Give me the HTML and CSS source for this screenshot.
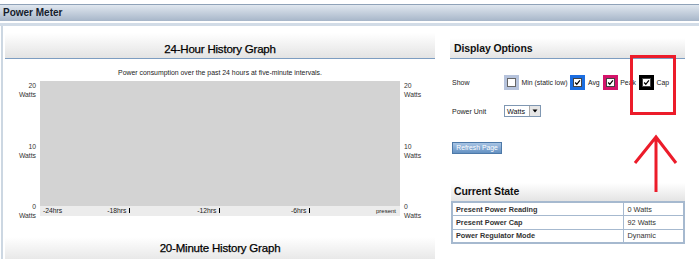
FILE: index.html
```html
<!DOCTYPE html>
<html>
<head>
<meta charset="utf-8">
<link rel="stylesheet" href="styles.css">
</head>
<body>
<div class="page">
  <div class="topbar">Power Meter</div>
  <div class="topband"></div>
  <div class="main">
    <div class="leftcol">
      <div class="bighead head24">24-Hour History Graph</div>
      <div class="subtitle">Power consumption over the past 24 hours at five-minute intervals.</div>
      <div class="graphrow">
        <div class="ylabels left">
          <div class="yl">20<br>Watts</div>
          <div class="yl">10<br>Watts</div>
          <div class="yl">0<br>Watts</div>
        </div>
        <div class="graph">
          <div class="plot"></div>
          <div class="xaxis">
            <div class="seg"><span>-24hrs</span><span class="tk">-18hrs<i class="tick"></i></span></div>
            <div class="seg end"><span class="tk">-12hrs<i class="tick"></i></span></div>
            <div class="seg end"><span class="tk">-6hrs<i class="tick"></i></span></div>
            <div class="seg end"><span class="present">present</span></div>
          </div>
        </div>
        <div class="ylabels right">
          <div class="yl">20<br>Watts</div>
          <div class="yl">10<br>Watts</div>
          <div class="yl">0<br>Watts</div>
        </div>
      </div>
      <div class="bighead head20">20-Minute History Graph</div>
    </div>
    <div class="rightcol">
      <div class="sidehead dohead">Display Options</div>
      <div class="optrow showrow">
        <div class="optlabel">Show</div>
        <div class="checks">
          <span class="cb c-min"><span class="box"></span></span><span class="cbl">Min (static low)</span>
          <span class="cb c-avg"><span class="box"><svg viewBox="0 0 9 9"><path d="M1.5 4.5 L3.6 6.8 L7.6 1.8" fill="none" stroke="#000" stroke-width="1.6"/></svg></span></span><span class="cbl">Avg</span>
          <span class="cb c-peak"><span class="box"><svg viewBox="0 0 9 9"><path d="M1.5 4.5 L3.6 6.8 L7.6 1.8" fill="none" stroke="#000" stroke-width="1.6"/></svg></span></span><span class="cbl">Peak</span>
          <span class="cb c-cap"><span class="box"><svg viewBox="0 0 9 9"><path d="M1.5 4.5 L3.6 6.8 L7.6 1.8" fill="none" stroke="#000" stroke-width="1.6"/></svg></span></span><span class="cbl">Cap</span>
        </div>
      </div>
      <div class="optrow unitrow">
        <div class="optlabel">Power Unit</div>
        <div class="select"><span class="selval">Watts</span><span class="selbtn"><svg viewBox="0 0 8 8"><path d="M1.5 2.5 L6.5 2.5 L4 5.5 Z" fill="#000"/></svg></span></div>
      </div>
      <div class="btnrow"><span class="btn">Refresh Page</span></div>
      <div class="sidehead cshead">Current State</div>
      <table class="state">
        <tr><th>Present Power Reading</th><td>0 Watts</td></tr>
        <tr><th>Present Power Cap</th><td>92 Watts</td></tr>
        <tr><th>Power Regulator Mode</th><td>Dynamic</td></tr>
      </table>
    </div>
  </div>
  <div class="redbox"></div>
  <svg class="redarrow" viewBox="0 0 50 64" width="50" height="64"><path d="M26 7 L26 62 M5 33 L26 7 L46 33" fill="none" stroke="#ec1c2a" stroke-width="3"/></svg>
</div>
</body>
</html>
```
FILE: styles.css
```css
* { box-sizing: border-box; }
html, body { margin: 0; padding: 0; background: #fff; }
body { font-family: "Liberation Sans", Arial, sans-serif; color: #222; }
.page { position: relative; width: 699px; height: 259px; overflow: hidden; padding-top: 4px; }

.topbar {
  height: 17px;
  border-top: 1px solid #8fa2b8;
  background: linear-gradient(#e0e7ef, #a7b6c9);
  font-weight: bold;
  font-size: 10px;
  line-height: 16px;
  padding-left: 3px;
  color: #15202c;
}
.topband { height: 3px; margin-top: 2px; background: #d2dce7; }

.main { display: flex; margin-left: 1px; border-left: 2px solid #ccd7e2; height: 240px; }

.leftcol { width: 430px; margin-left: 2px; }
.bighead {
  text-align: center;
  font-size: 11.5px;
  letter-spacing: -0.2px;
  color: #000;
  background: linear-gradient(#ffffff 10%, #e3e3e3);
  -webkit-text-stroke: 0.25px #000;
}
.head24 { margin-top: 4px; height: 29px; padding-top: 12px; line-height: 14px; border-bottom: 1px solid #7d9dc1; }
.head20 { margin-top: 14px; height: 30px; padding-top: 7px; line-height: 14px; }

.subtitle { text-align: center; font-size: 6.9px; line-height: 10px; margin-top: 9px; color: #222; }

.graphrow { display: flex; margin-top: 3px; height: 139px; }
.ylabels { display: flex; flex-direction: column; justify-content: space-between; font-size: 6.8px; line-height: 9px; color: #333; }
.ylabels.left { width: 31px; text-align: right; margin-right: 4px; }
.ylabels.right { width: 24px; text-align: left; margin-left: 4px; }
.graph { width: 360px; }
.plot { height: 125px; background: #d3d3d3; }
.xaxis { height: 10px; background: #ececec; display: flex; font-size: 6.8px; line-height: 10px; color: #222; }
.seg { flex: 1; display: flex; justify-content: space-between; padding-left: 3px; }
.seg.end { justify-content: flex-end; }
.tk { display: inline-flex; align-items: center; }
.tick { display: inline-block; width: 1.5px; height: 5px; background: #000; margin-left: 2px; margin-top: -2px; }
.present { font-size: 6px; padding-right: 4px; }

.rightcol { width: 235px; margin-left: 15px; }
.sidehead {
  font-weight: bold;
  font-size: 10.5px;
  letter-spacing: -0.1px;
  color: #111;
  padding-left: 4px;
  background: linear-gradient(#ffffff, #e4e4e4);
}
.dohead { margin-top: 12px; height: 21px; line-height: 20px; border-bottom: 1px solid #7d9dc1; }

.optrow { display: flex; align-items: center; font-size: 7px; color: #222; padding-left: 2px; }
.showrow { margin-top: 16px; height: 15px; }
.unitrow { margin-top: 15px; height: 12px; }
.optlabel { width: 52px; }
.checks { display: flex; align-items: center; }
.cb { width: 15px; height: 15px; padding: 3px; display: inline-block; }
.cb .box { display: block; width: 9px; height: 9px; background: #fff; border: 1px solid #444; position: relative; }
.cb .box svg { display: block; width: 7px; height: 7px; }
.c-min { background: #b6c3dc; }
.c-min .box { border-color: #666; }
.c-avg { background: #1b6de0; }
.c-peak { background: #d4146a; }
.c-cap { background: #000; }
.cbl { margin: 0 3px 0 2.5px; font-size: 6.9px; }

.select { display: flex; width: 37px; height: 12px; border: 1px solid #7f97b2; background: #fff; align-items: center; }
.selval { flex: 1; font-size: 7.2px; padding-left: 2px; color: #111; }
.selbtn { width: 11px; height: 10px; background: #e6e6e6; border-left: 1px solid #aaa; margin-right: 0; display: flex; align-items: center; justify-content: center; }
.selbtn svg { width: 8px; height: 8px; }

.btnrow { margin-top: 19px; padding-left: 2px; height: 12px; }
.btn {
  display: inline-block; width: 50px; height: 12px;
  border: 1px solid #4d79a8;
  background: linear-gradient(#a8c4e4, #6491c2);
  color: #fff; font-size: 6.8px; line-height: 10px; text-align: center;
}

.cshead { margin-top: 35px; height: 18px; line-height: 16px; font-weight: bold; padding-left: 3px; margin-left: 1px; }
.state { margin-left: 1px; width: 234px; border-collapse: collapse; border: 2px solid #a6b9cf; font-size: 7.3px; color: #333; }
.state th, .state td { border: 1px solid #a6b9cf; height: 13.5px; padding: 0 4px; text-align: left; line-height: 11px; }
.state th { font-weight: bold; width: 171px; padding-left: 3px; }
.state td { font-weight: normal; }

.redbox { position: absolute; left: 630px; top: 55px; width: 46px; height: 60px; border: 3px solid #ec1c2a; }
.redarrow { position: absolute; left: 630px; top: 130px; }
```
